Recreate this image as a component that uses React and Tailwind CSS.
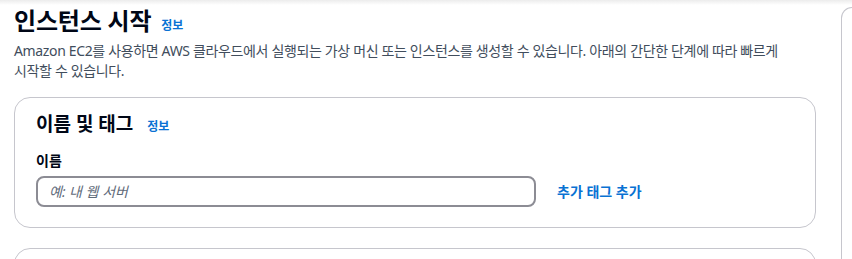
export default function App() {
  const font = { fontFamily: '"Noto Sans", "Noto Sans CJK KR", sans-serif' };

  return (
    <div className="w-[852px] h-[259px] overflow-hidden bg-white relative" style={font}>
      {/* shadow from the header above */}
      <div className="absolute top-0 left-0 right-0 h-[5px] bg-gradient-to-b from-[#ececec] to-white" />

      <div className="flex">
        <main className="w-[802px] ml-[14px] shrink-0">
          <div className="pt-[6px] flex items-baseline gap-[10px]">
            <h1 className="text-[24px] leading-[30px] font-bold text-[#000716] tracking-[-0.2px]">인스턴스 시작</h1>
            <a className="text-[12px] font-bold text-[#0972d3]">정보</a>
          </div>
          <p className="mt-[5px] max-w-[785px] break-keep text-[14px] leading-[20px] text-[#414d5c] tracking-[-0.35px]">
            Amazon EC2를 사용하면 AWS 클라우드에서 실행되는 가상 머신 또는 인스턴스를 생성할 수 있습니다. 아래의 간단한 단계에 따라 빠르게 시작할 수 있습니다.
          </p>

          <section className="mt-[16px] border border-[#c6c6cd] rounded-[16px] px-[21px] pt-[15px] pb-[20px]">
            <div className="flex items-baseline gap-[14px]">
              <h2 className="text-[19px] leading-[22px] font-bold text-[#000716]">이름 및 태그</h2>
              <a className="text-[12px] font-bold text-[#0972d3]">정보</a>
            </div>
            <label className="block mt-[15px] text-[14px] leading-[20px] font-bold text-[#000716]">이름</label>
            <div className="mt-[5px] flex items-center gap-[21px]">
              <input
                placeholder="예: 내 웹 서버"
                className="w-[500px] h-[31px] border-2 border-[#8c8c94] rounded-[8px] px-[11px] text-[14px] placeholder:italic placeholder:text-[#5f6b7a] outline-none"
                style={font}
              />
              <a className="text-[14px] font-bold text-[#0972d3]">추가 태그 추가</a>
            </div>
          </section>

          <section className="mt-[20px] h-[60px] border border-[#c6c6cd] rounded-[16px]" />
        </main>

        <aside className="ml-[25px] mt-[7px] flex-1 h-[300px] border-l border-t border-[#c6c6cd] rounded-tl-[16px]" />
      </div>
    </div>
  );
}
